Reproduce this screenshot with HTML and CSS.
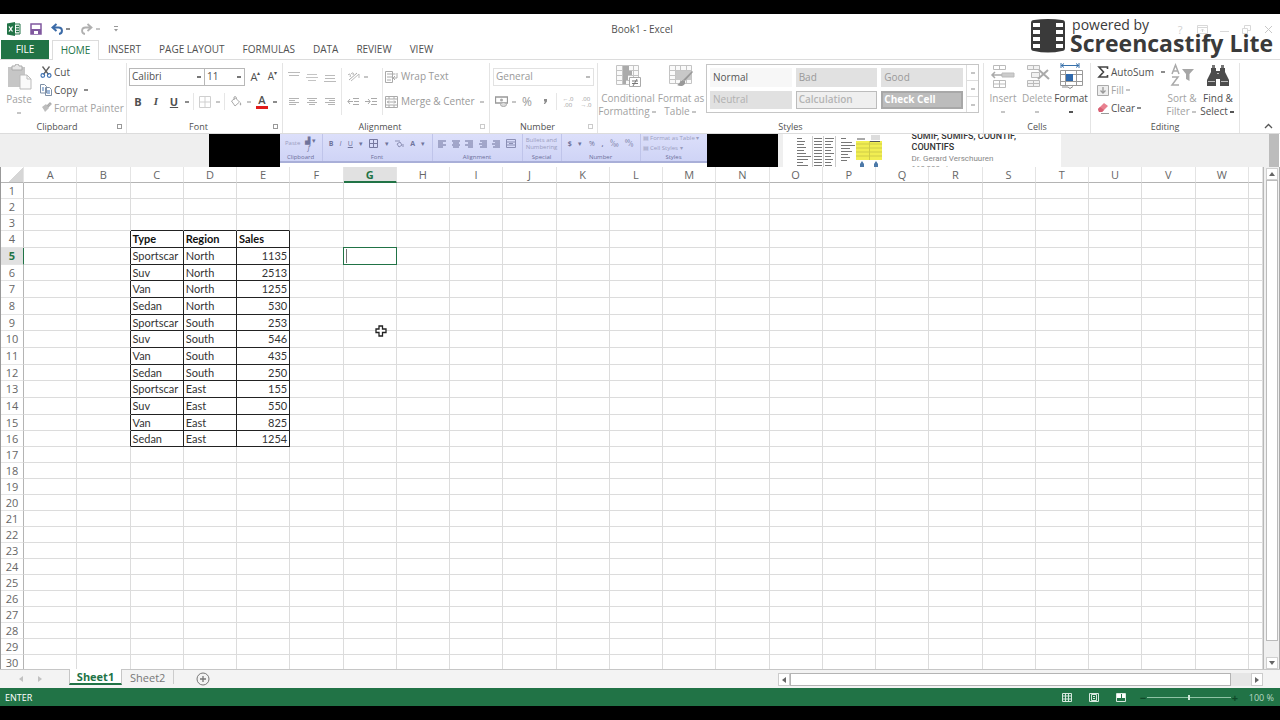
FILE: index.html
```html
<!DOCTYPE html>
<html lang="en">
<head>
<meta charset="utf-8">
<title>Book1 - Excel</title>
<link rel="stylesheet" href="styles.css">
</head>
<body>
<div class="app">
  <header class="titlebar">
    <div class="quick">
      <svg class="ico-xl" width="16" height="14" viewBox="0 0 16 14"><path d="M8 2h6v10H8z" fill="#fff" stroke="#217346"/><path d="M10 4.500h3M10 7h3M10 9.500h3" stroke="#217346" stroke-width="1.300"/><path d="M1 1.500 9 0v14l-8-1.500z" fill="#217346"/><path d="m3 4.500 3.500 5m0-5L3 9.500" stroke="#fff" stroke-width="1.300"/></svg>
      <button class="qbtn" aria-label="Save"><svg width="12" height="12" viewBox="0 0 12 12"><path d="M1 1h10v10H1z" fill="#fff" stroke="#80589f" stroke-width="1.500"/><path d="M1 6h10v5H1z" fill="#80589f"/><path d="M4 8h4v3H4z" fill="#fff"/></svg></button>
      <button class="qbtn undo" aria-label="Undo"><svg width="12" height="12" viewBox="0 0 12 12"><path d="M5.500 1 1.500 4.500l4 3.500M2 4.500h5.500c4.500 0 4.500 6 .5 6.500" fill="none" stroke="#3b6ba8" stroke-width="2"/></svg><i class="caret"></i></button>
      <button class="qbtn undo dim" aria-label="Redo"><svg width="12" height="12" viewBox="0 0 12 12"><path d="m6.500 1 4 3.500-4 3.500M10 4.500H4.500C0 4.500 0 10.500 4 11" fill="none" stroke="#b0b0b0" stroke-width="1.800"/></svg><i class="caret"></i></button>
      <button class="qbtn" aria-label="Customize toolbar"><svg width="6" height="6" viewBox="0 0 6 6"><path d="M1 .5h4" stroke="#999"/><path d="M1 3h4L3 5.500z" fill="#999"/></svg></button>
    </div>
    <h1 class="doc">Book1 - Excel</h1>
    <div class="winbtns">
      <button aria-label="Help">?</button>
      <button aria-label="Ribbon display"><svg width="11" height="9" viewBox="0 0 11 9"><path d="M.5.5h10v8H.5zM.5 2.500h10M5.500 7V4M4 5.500 5.500 4 7 5.500" fill="none" stroke="#d8d8d8"/></svg></button>
      <button aria-label="Minimize"><svg width="9" height="9" viewBox="0 0 9 9"><path d="M0 6.500h9" stroke="#d8d8d8"/></svg></button>
      <button aria-label="Restore"><svg width="9" height="9" viewBox="0 0 9 9"><path d="M.5 3.500h5v5h-5zM2.500 3V.5h6v5H6" fill="none" stroke="#d8d8d8"/></svg></button>
      <button aria-label="Close"><svg width="9" height="9" viewBox="0 0 9 9"><path d="m1 1 7 7m0-7L1 8" stroke="#c8c8c8"/></svg></button>
    </div>
  </header>
  <nav class="tabs">
    <button class="file">FILE</button>
    <button class="on">HOME</button>
    <button>INSERT</button>
    <button>PAGE LAYOUT</button>
    <button>FORMULAS</button>
    <button>DATA</button>
    <button>REVIEW</button>
    <button>VIEW</button>
  </nav>

  <div class="ribbon">
    <section class="group g-clip">
      <div class="body">
        <button class="big dim paste"><svg width="26" height="26" viewBox="0 0 26 26"><path d="M2 3h17v20H2z" fill="#c6c6c6"/><path d="M6 2h3a2 2 0 0 1 4 0h3v4H6z" fill="#e6e6e6" stroke="#aaa"/><path d="M14 11h7l4 4v10H14z" fill="#fafafa" stroke="#bbb"/><path d="M21 11v4h4" fill="none" stroke="#bbb"/></svg><span>Paste</span><i class="caret"></i></button>
        <div class="list">
          <button><svg width="12" height="12" viewBox="0 0 12 12"><path d="m2.500.5 6 8M9.500.5l-6 8" stroke="#606060" stroke-width="1.300"/><circle cx="2.800" cy="9.500" r="1.800" fill="none" stroke="#3f73b5" stroke-width="1.200"/><circle cx="9.200" cy="9.500" r="1.800" fill="none" stroke="#3f73b5" stroke-width="1.200"/></svg>Cut</button>
          <button><svg width="12" height="12" viewBox="0 0 12 12"><path d="M.5.5h4l2 2V9h-6zM5.500 3.500h4l2 2v6h-6z" fill="#fff" stroke="#7e8fa5"/><path d="M2 4h2M2 6h2M7 7h3M7 9h3" stroke="#3f73b5"/></svg>Copy<i class="caret far"></i></button>
          <button class="dim"><svg width="12" height="12" viewBox="0 0 12 12"><path d="m2 5 4-3 3 4-4 4-1-2z" fill="#bdbdbd"/><path d="m7 4 3-3 1 1-3 3" fill="none" stroke="#aaa" stroke-width="1.300"/></svg>Format Painter</button>
        </div>
      </div>
      <footer>Clipboard<i class="launch"></i></footer>
    </section>

    <section class="group g-font">
      <div class="body col">
        <div class="row">
          <label class="combo wide"><select aria-label="Font"><option>Calibri</option></select></label><label class="combo size"><select aria-label="Font size"><option>11</option></select></label>
          <button class="tool grow">A<sup>▴</sup></button><button class="tool grow small">A<sup>▾</sup></button>
        </div>
        <div class="row">
          <button class="tool"><b>B</b></button><button class="tool serif"><b>I</b></button><button class="tool"><b><u>U</u></b></button><i class="caret"></i><span class="sep"></span>
          <button class="tool dim" aria-label="Borders"><svg width="12" height="12" viewBox="0 0 12 12"><path d="M.5.5h11v11H.5zM6 0v12M0 6h12" fill="none" stroke="#cfcfcf"/></svg></button><i class="caret pale"></i><span class="sep"></span>
          <button class="tool dim" aria-label="Fill color"><svg width="12" height="12" viewBox="0 0 12 12"><path d="m1.500 5 4-3 4 4-4.500 4zM4 4V1c2-1 2.500 0 2.500 2" fill="none" stroke="#aaa"/><path d="M10.500 6q1.500 2.500 0 3.500-1.500-1 0-3.500" fill="#aaa"/></svg></button><i class="caret pale"></i>
          <button class="tool fcolor"><span>A</span></button><i class="caret"></i>
        </div>
      </div>
      <footer>Font<i class="launch"></i></footer>
    </section>

    <section class="group g-align">
      <div class="body">
        <div class="toolgrid three">
          <button class="tool" aria-label="Top align"><svg width="12" height="10" viewBox="0 0 12 10"><path d="M0 .5h12M1 3.500h10" stroke="#bbb"/></svg></button>
          <button class="tool" aria-label="Middle align"><svg width="12" height="10" viewBox="0 0 12 10"><path d="M1 2.500h10M0 5.500h12M2 8.500h8" stroke="#c4c4c4"/></svg></button>
          <button class="tool" aria-label="Bottom align"><svg width="12" height="10" viewBox="0 0 12 10"><path d="M1 3.500h10M1 6.500h10M0 9.500h12" stroke="#bbb"/></svg></button>
          <button class="tool" aria-label="Align left"><svg width="10" height="8" viewBox="0 0 10 8"><path d="M0 .5h10M0 2.500h6M0 4.500h10M0 6.500h7" stroke="#b4b4b4"/></svg></button>
          <button class="tool" aria-label="Center"><svg width="10" height="8" viewBox="0 0 10 8"><path d="M0 .5h10M2 2.500h6M0 4.500h10M2 6.500h6" stroke="#b4b4b4"/></svg></button>
          <button class="tool" aria-label="Align right"><svg width="10" height="8" viewBox="0 0 10 8"><path d="M0 .5h10M4 2.500h6M0 4.500h10M3 6.500h7" stroke="#b4b4b4"/></svg></button>
        </div>
        <span class="sep"></span>
        <div class="toolgrid two">
          <button class="tool" aria-label="Orientation"><svg width="13" height="11" viewBox="0 0 13 11"><path d="m2 9 8-7" stroke="#aaa"/><path d="M4 10 12 3v4" fill="none" stroke="#bbb"/><path d="M1 4c2-2 3 0 2 2m1-3c2-2 3-1 2 1" fill="none" stroke="#aaa"/></svg></button>
          <i class="caret pale"></i>
          <button class="tool" aria-label="Decrease indent"><svg width="12" height="8" viewBox="0 0 12 8"><path d="M6 .5h6M7 3.500h5M6 6.500h6M3 1 .8 3.500 3 6M1 3.500h5" fill="none" stroke="#aaa"/></svg></button>
          <button class="tool" aria-label="Increase indent"><svg width="12" height="8" viewBox="0 0 12 8"><path d="M6 .5h6M7 3.500h5M6 6.500h6M3 1l2.200 2.500L3 6M0 3.500h5" fill="none" stroke="#aaa"/></svg></button>
        </div>
        <span class="sep"></span>
        <div class="toolgrid one">
          <button class="line"><svg width="13" height="12" viewBox="0 0 13 12"><path d="M.5.5h7v11h-7zM2 3h8.500M2 6h6M2 9h4" fill="none" stroke="#aaa"/><path d="M12 2v5H8m2-2L8 7l2 2" fill="none" stroke="#aaa"/></svg>Wrap Text</button>
          <button class="line"><svg width="13" height="12" viewBox="0 0 13 12"><path d="M.5.5h12v11H.5zM.5 3h12M.5 9h12M4 .5V3m5-2.500V3M4 9v2.500M9 9v2.500M2 6h9M4 4.500 2.500 6 4 7.500m5-3L10.500 6 9 7.500" fill="none" stroke="#aaa"/></svg>Merge &amp; Center<i class="caret pale"></i></button>
        </div>
      </div>
      <footer>Alignment<i class="launch pale"></i></footer>
    </section>

    <section class="group g-num">
      <div class="body col">
        <div class="row"><label class="combo pale"><select aria-label="Number format"><option>General</option></select></label></div>
        <div class="row">
          <button class="tool" aria-label="Currency"><svg width="13" height="11" viewBox="0 0 13 11"><path d="M.5 1h12v6H.5z" fill="none" stroke="#999" stroke-width="1.300"/><circle cx="6.500" cy="4" r="1.500" fill="#aaa"/><ellipse cx="8.500" cy="8.500" rx="3" ry="2" fill="#ddd" stroke="#aaa"/></svg></button><i class="caret pale"></i>
          <button class="tool pct">%</button><button class="tool pct comma" aria-label="Comma style"><svg width="5" height="7" viewBox="0 0 5 7"><path d="M1 1h3v2.500L2 6H.8L2 3.500H1z" fill="#8c8c8c"/></svg></button><span class="sep"></span>
          <button class="tool dec">←.0<br>.00</button><button class="tool dec">.00<br>→.0</button>
        </div>
      </div>
      <footer>Number<i class="launch pale"></i></footer>
    </section>

    <section class="group g-style">
      <div class="body">
        <button class="big dim cond"><svg width="26" height="26" viewBox="0 0 26 26"><path d="M1.500 2.500h22v19h-22zM1.500 7.500h22M1.500 12.500h22M1.500 17.500h22M7.500 2.500v19M18.500 2.500v19" fill="#fafafa" stroke="#c4c4c4"/><path d="M8 3h6v5H8zM8 8h9v4H8zM8 12h5v5H8zM8 17h3v4H8z" fill="#aaa"/><path d="M14.500 14.500h11v9h-11z" fill="#fff" stroke="#aaa"/><path d="M17 18h6m-6 2.500h6M22 16l-4 7" stroke="#777"/></svg><span>Conditional</span><span>Formatting<i class="caret"></i></span></button>
        <button class="big dim astable"><svg width="26" height="26" viewBox="0 0 26 26"><path d="M1.500 2.500h22v18h-22zM1.500 7.500h22M1.500 12.500h22M1.500 16.500h22M7.500 2.500v18M12.500 2.500v18M18.500 2.500v18" fill="#fafafa" stroke="#c4c4c4"/><path d="M8 8h15v9H8z" fill="#c8c8c8"/><path d="m25 9-8 9-2-1 9-9z" fill="#999"/><path d="M15 17c-3 0-3 4-6 5 4 2 9 1 8-4z" fill="#999"/></svg><span>Format as</span><span>Table<i class="caret"></i></span></button>
        <div class="gallery">
          <div class="cells">
            <button class="st normal">Normal</button><button class="st">Bad</button><button class="st">Good</button>
            <button class="st pale">Neutral</button><button class="st calc">Calculation</button><button class="st check">Check Cell</button>
          </div>
          <div class="gscroll"><button aria-label="Up"><i class="caret pale"></i></button><button aria-label="Down"><i class="caret pale"></i></button><button aria-label="More"><i class="caret pale"></i></button></div>
        </div>
      </div>
      <footer>Styles</footer>
    </section>

    <section class="group g-cells">
      <div class="body">
        <button class="big dim"><svg width="26" height="26" viewBox="0 0 26 26"><path d="M3.500 2.500h12v4h-12zM9.500 2.500v4M3.500 17.500h12v7h-12zM9.500 17.500v7M3.500 21h12" fill="none" stroke="#bbb"/><path d="M12 10h12v4H12z" fill="#ccc" stroke="#bbb"/><path d="M12 12H2m3-3-3 3 3 3" fill="none" stroke="#aaa" stroke-width="1.500"/></svg><span>Insert</span><i class="caret"></i></button>
        <button class="big dim"><svg width="26" height="26" viewBox="0 0 26 26"><path d="M3.500 2.500h12v4h-12zM9.500 2.500v4M7.500 9.500h8v5h-8zM3.500 17.500h12v6h-12zM9.500 17.500v6M3.500 20.500h12" fill="#f2f2f2" stroke="#bbb"/><path d="m15 7 10 9m-1-9-10 9" stroke="#aaa" stroke-width="2"/></svg><span>Delete</span><i class="caret"></i></button>
        <button class="big"><svg width="26" height="26" viewBox="0 0 26 26"><path d="M3 2.500h18M3 0v5M21 0v5M6 .5 3.500 2.500 6 4.500M18 .5l2.500 2-2.500 2" fill="none" stroke="#3871ab"/><path d="M2.500 7.500h22v15h-22zM2.500 11.500h22M2.500 18.500h22M7.500 7.500v15M18.500 7.500v15" fill="#fff" stroke="#999"/><path d="M8 11h7v7H8z" fill="#2f69ad"/><path d="M4 24h6l2 1.500 3-2" fill="none" stroke="#888"/></svg><span>Format</span><i class="caret dark"></i></button>
      </div>
      <footer>Cells</footer>
    </section>

    <section class="group g-edit">
      <div class="body">
        <div class="list">
          <button><svg width="12" height="12" viewBox="0 0 12 12"><path d="M10.500 3V1H2l4.500 5L2 11h8.500V9" fill="none" stroke="#444" stroke-width="1.600"/></svg>AutoSum<i class="caret far"></i></button>
          <button class="dim"><svg width="12" height="12" viewBox="0 0 12 12"><path d="M.5 1.500h11v10H.5z" fill="#eee" stroke="#aaa"/><path d="M6 3v6M3.500 6.500 6 9l2.500-2.500" fill="none" stroke="#999" stroke-width="1.300"/></svg>Fill<i class="caret"></i></button>
          <button><svg width="12" height="12" viewBox="0 0 12 12"><path d="m1 7 6-6 4 3-6 6H2z" fill="#e8808f"/><path d="m1 7 2-2 4 3-2 2H2z" fill="#d85f73"/><path d="M4 11.500h8" stroke="#999"/></svg>Clear<i class="caret"></i></button>
        </div>
        <button class="big dim sort"><svg width="26" height="26" viewBox="0 0 26 26"><path d="m3 11 3.500-9L10 11M4 8h5M3 14h6l-6 8h7" fill="none" stroke="#aaa" stroke-width="1.500"/><path d="M13 6h12l-4.500 5v7L17 16v-5z" fill="#a6a6a6"/></svg><span>Sort &amp;</span><span>Filter<i class="caret"></i></span></button>
        <button class="big"><svg width="26" height="26" viewBox="0 0 26 26"><path d="M6 5h5v3h4V5h5v4l4 8v6h-9v-7h-4v7H2v-6l4-8z" fill="#4c4c4c"/><path d="M7 2h3v3H7zm9 0h3v3h-3z" fill="#777"/><path d="M3 18.500h7m6 0h7M12 10.500h2" stroke="#bbb"/></svg><span>Find &amp;</span><span>Select<i class="caret dark"></i></span></button>
      </div>
      <footer>Editing</footer>
    </section>
    <button class="collapse" aria-label="Collapse ribbon"><svg width="9" height="6" viewBox="0 0 9 6"><path d="m1 5 3.500-3.500L8 5" fill="none" stroke="#555" stroke-width="1.300"/></svg></button>
  </div>

  <div class="strip">
    <div class="gap"></div>
    <div class="black"></div>
    <div class="mini">
      <div class="mg m1"><div class="mb"><span>Paste</span><span class="ink">▟ ▾<br>&nbsp;<em>ƒ</em></span></div><small>Clipboard</small></div>
      <div class="mg m2"><div class="mb ink"><b>B</b><em>I</em><u>U</u><span>▾</span><svg width="9" height="9" viewBox="0 0 9 9"><path d="M.5.5h8v8h-8zM4.500 0v9M0 4.500h9" fill="none" stroke="#7679a0"/></svg><span>▾</span><svg width="9" height="9" viewBox="0 0 9 9"><path d="M0 2h5M2 5l3-2 2 3-3 2zM8 5v3" fill="none" stroke="#8b8fb4"/></svg><b>A</b><span>▾</span></div><small>Font</small></div>
      <div class="mg m3"><div class="mb ink"><svg width="8" height="8" viewBox="0 0 8 8"><path d="M0 1h8M0 3h5M0 5h8M0 7h5" stroke="#6c709a"/></svg><svg width="8" height="8" viewBox="0 0 8 8"><path d="M0 1h8M1 3h6M0 5h8M1 7h6" stroke="#6c709a"/></svg><svg width="8" height="8" viewBox="0 0 8 8"><path d="M0 1h8M3 3h5M0 5h8M3 7h5" stroke="#6c709a"/></svg><svg width="8" height="8" viewBox="0 0 8 8"><path d="M1 1h7M3 3h5M3 5h5M1 7h7M0 4h3" stroke="#6c709a"/></svg><svg width="8" height="8" viewBox="0 0 8 8"><path d="M1 1h7M3 3h5M3 5h5M1 7h7M0 4h3" stroke="#6c709a"/></svg><svg width="10" height="9" viewBox="0 0 10 9"><path d="M.5.5h9v8h-9zM.5 3h9M.5 6h9M3 4.500h4" fill="none" stroke="#8b8fb4"/></svg></div><small>Alignment</small></div>
      <div class="mg m4"><div class="mb"><span>Bullets and<br>Numbering</span></div><small>Special</small></div>
      <div class="mg m5"><div class="mb ink"><b>$</b><span>▾</span><span>%</span><b>,</b><span>⁰⁄₀₀</span><span>⁰⁰⁄₀</span></div><small>Number</small></div>
      <div class="mg m6"><div class="mb lines"><span>▤ Format as Table ▾</span><span>▤ Cell Styles ▾</span></div><small>Styles</small></div>
    </div>
    <div class="black"></div>
    <div class="video">
      <svg width="88" height="33" viewBox="0 0 88 33"><path d="M61 7h26v19H61z" fill="#f1ee52"/><path d="M74.500 7v19M61 10h26M61 14h26M61 18h26M61 22h26" stroke="#cfcc48"/><path d="M76 1h9v5h-9z" fill="#ddd"/><path d="M62 5h8M75 7.500h10" stroke="#555"/><path d="M17.500 2v31M28.500 2v31M40.500 2v31" stroke="#ccc"/><path d="M2 4.500h5M2 7.500h8M2 10.500h7M2 13.500h9M2 16.500h7M2 19.500h9M2 22.500h14M2 25.500h11M2 28.500h6M2 31.500h11M19 4.500h8M19 7.500h8M19 10.500h8M19 13.500h8M19 16.500h8M19 19.500h8M19 22.500h8M19 25.500h8M19 28.500h8M19 31.500h8M30 4.500h9M30 7.500h8M30 10.500h6M30 13.500h8M30 16.500h6M30 19.500h9M30 22.500h6M30 25.500h8M30 28.500h6M30 31.500h7M46 4.500h5M46 8.500h11M46 11.500h14M46 14.500h9M46 17.500h11M46 20.500h7M46 23.500h9M46 26.500h6" stroke="#777"/><path d="M67 27l2 3v3h-4v-3zM81 27l2 3v3h-4v-3z" fill="#4c79a8"/></svg>
      <div class="vtext"><strong>SUMIF, SUMIFS, COUNTIF,<br>COUNTIFS</strong><span>Dr. Gerard Verschuuren<br>168,388 views</span></div>
    </div>
    <div class="gap right"></div>
    <div class="thumbbar"></div>
  </div>

  <main class="sheet">
    <div class="grid">
      <table id="cells"></table>
      <svg class="cursor" width="12" height="12" viewBox="0 0 12 12"><path d="M4 1h3.500v3H11v3.500H7.500V11H4V7.500H1V4h3z" fill="#fff" stroke="#222" stroke-width="1.300"/></svg>
    </div>
    <div class="vbar">
      <button aria-label="Scroll up"><i class="tri up"></i></button>
      <div class="vthumb"></div>
      <button aria-label="Scroll down"><i class="tri down"></i></button>
    </div>
  </main>

  <div class="sheettabs">
    <div class="nav"><button aria-label="Previous sheet"><i class="tri left"></i></button><button aria-label="Next sheet"><i class="tri right"></i></button></div>
    <button class="stab on">Sheet1</button>
    <button class="stab">Sheet2</button>
    <button class="add" aria-label="New sheet"><svg width="14" height="14" viewBox="0 0 14 14"><circle cx="7" cy="7" r="6" fill="none" stroke="#777"/><path d="M7 4v6M4 7h6" stroke="#777" stroke-width="1.300"/></svg></button>
    <div class="hbar">
      <button aria-label="Scroll left"><i class="tri left"></i></button>
      <div class="hthumb"></div><div class="htrack"></div>
      <button aria-label="Scroll right"><i class="tri right"></i></button>
    </div>
  </div>

  <footer class="status">
    <span class="mode">ENTER</span>
    <button aria-label="Normal view"><svg width="10" height="9" viewBox="0 0 10 9"><path d="M.5.5h9v8h-9zM3.500 0v9M6.500 0v9M0 3h10M0 6h10" fill="none" stroke="#d7e8de"/></svg></button>
    <button aria-label="Page layout view"><svg width="10" height="9" viewBox="0 0 10 9"><path d="M.5.5h9v8h-9zM2.500 1.500h5v6h-5zM4 3.500h2M4 5.500h2" fill="none" stroke="#d7e8de"/></svg></button>
    <button aria-label="Page break view"><svg width="10" height="9" viewBox="0 0 10 9"><path d="M.5.500h9v8h-9z" fill="none" stroke="#d7e8de"/><path d="M1 1h4v4H1zM6 1h3v4H6z" fill="#fff"/></svg></button>
    <div class="zoom"><button aria-label="Zoom out">−</button><input type="range" aria-label="Zoom" min="0" max="200" value="100"><button aria-label="Zoom in">+</button></div>
    <span class="pct">100 %</span>
  </footer>

  <div class="brand">
    <svg width="34" height="35" viewBox="0 0 34 35"><path d="M3 2q14-2 28 0 3 0 3 3v25q0 3-3 3-14 3-28 0-3 0-3-3V5q0-3 3-3z" fill="#3a3a3a"/><path d="M2 5h7v4H2zM2 12h7v4H2zM2 19h7v4H2zM2 26h7v4H2zM25 5h7v4h-7zM25 12h7v4h-7zM25 19h7v4h-7zM25 26h7v4h-7z" fill="#fff"/></svg>
    <div><span>powered by</span><strong>Screencastify Lite</strong></div>
  </div>
</div>
<script src="sheet.js"></script>
</body>
</html>
```
FILE: styles.css
```css
* { box-sizing: border-box; }
body { margin: 0; background: #000; font: 10px/13px "Open Sans", "Noto Sans", sans-serif; color: #505050; }
button, select { font: inherit; color: inherit; background: none; border: 0; padding: 0; margin: 0; }
button { display: inline-flex; align-items: center; justify-content: center; white-space: nowrap; }
svg { display: block; flex: none; }
.app { position: relative; display: flex; flex-direction: column; height: 100vh; background: #fff; border: solid #000; border-width: 14px 0; }
.dim { color: #a2a2a2; }

.caret { flex: none; display: inline-block; width: 8px; height: 3px; background: linear-gradient(#8c8c8c, #8c8c8c) center / 4px 2px no-repeat; vertical-align: middle; }
.dim .caret, .caret.pale { opacity: .5; }
.caret.dark { background-image: linear-gradient(#555, #555); }
.list .caret.far { margin-left: 3px; }
.list .caret { margin-left: -2px; }
.sep { width: 1px; align-self: stretch; margin: 0 2px; background: #e6e6e6; }

.titlebar { display: grid; grid-template-columns: 1fr auto 1fr; align-items: center; height: 26px; padding: 4px 2px 0 6px; }
.quick { display: flex; align-items: center; gap: 8px; }
.qbtn { height: 14px; min-width: 12px; gap: 1px; }
.undo { width: 22px; }
.doc { margin: 0; font-size: 10px; font-weight: 400; }
.winbtns { display: flex; justify-content: flex-end; gap: 2px; color: #d0d0d0; }
.winbtns button { width: 20px; height: 14px; font-size: 11px; }

.tabs { display: flex; height: 20px; padding-left: 1px; border-bottom: 1px solid #dcdcdc; }
.tabs button { padding: 0 8px; margin-right: 2px; }
.tabs .file { width: 48px; margin-right: 3px; background: #217346; color: #fff; }
.tabs .on { width: 47px; margin-right: 1px; color: #217346; border: 1px solid #dcdcdc; border-bottom: 0; background: #fff; margin-bottom: -1px; }

.ribbon { display: flex; height: 74px; flex: none; border-bottom: 1px solid #dcdcdc; padding-top: 3px; }
.group { display: flex; flex-direction: column; flex: none; border-right: 1px solid #e4e4e4; }
.group .body { display: flex; height: 56px; }
.group .col { flex-direction: column; padding-top: 1px; }
.group footer { display: flex; justify-content: center; position: relative; height: 14px; line-height: 15px; font-size: 9px; }
.g-clip footer, .g-font footer, .g-align footer, .g-num footer { padding-right: 12px; }
.launch { position: absolute; right: 4px; top: 5px; width: 5px; height: 5px; border: solid #999; border-width: 1px 0 0 1px; }
.launch::after { content: ""; position: absolute; right: 0; bottom: 0; width: 3px; height: 3px; border: solid #999; border-width: 0 1px 1px 0; }
.launch.pale { opacity: .5; }
.g-clip { width: 127px; }
.g-font { width: 156px; }
.g-align { width: 207px; }
.g-num { width: 108px; }
.g-style { flex: 1; min-width: 300px; }
.g-cells { width: 107px; }
.g-edit { width: 149px; }

.big { flex-direction: column; justify-content: flex-start; width: 34px; }
.big svg { margin-bottom: 3px; }
.big > span { height: 13px; line-height: 13px; }
.big > .caret { margin-top: 5px; }
.paste { width: 38px; padding-top: 1px; }
.cond { width: 60px; }
.astable { width: 46px; }
.g-cells .body { padding-left: 2px; }
.sort { width: 38px; }
.list { display: flex; flex-direction: column; }
.list button { height: 18px; gap: 2px; justify-content: flex-start; }
.g-clip .list { padding-left: 2px; }
.g-edit .list { padding-left: 6px; width: 72px; }

.row { display: flex; align-items: center; padding-left: 2px; height: 25px; }
.row + .row .tool { height: 18px; }
.row .sep { margin-top: 4px; margin-bottom: 4px; }
.tool { width: 18px; font-size: 11px; flex: none; }
.serif { font-family: "Liberation Serif", serif; font-style: italic; }
.grow { width: 17px; font-size: 11px; padding-left: 4px; }
.grow.small { font-size: 10px; }
.grow sup { font-size: 6px; line-height: 6px; align-self: flex-start; }
.fcolor span { width: 12px; line-height: 12px; border-bottom: 3px solid #e21b1b; font-weight: 600; }
.combo { position: relative; display: flex; height: 18px; border: 1px solid #b8b8b8; }
.combo::after { content: ""; position: absolute; right: 3px; top: 7px; width: 4px; height: 2px; background: #777; pointer-events: none; }
.combo select { appearance: none; width: 100%; padding-left: 2px; outline: 0; }
.combo.wide { width: 76px; }
.combo.size { width: 40px; border-left: 0; }
.combo.pale { width: 101px; margin-left: 1px; border-color: #e2e2e2; color: #999; }
.combo.pale::after { opacity: .5; }
.pct { color: #999; font-size: 12px; }
.dec { color: #999; font-size: 6px; line-height: 6px; }

.g-align .body { color: #999; padding: 1px 0 0 2px; }
.g-align .sep { margin-top: 4px; margin-bottom: 4px; }
.toolgrid { display: grid; grid-template-rows: 25px 25px; align-items: center; }
.three { grid-template-columns: repeat(3, 18px); }
.two { grid-template-columns: repeat(2, 18px); }
.one { flex: 1; }
.line { justify-content: flex-start; gap: 3px; }

.gallery { flex: 1; display: flex; margin: 1px 4px 6px 2px; border: 1px solid #c6c6c6; }
.cells { flex: 1; display: grid; grid-template-columns: repeat(3, 1fr); grid-template-rows: 1fr 1fr; gap: 4px; padding: 3px; }
.st { justify-content: flex-start; padding-left: 3px; background: #e1e1e1; color: #999; }
.st.normal { background: #f7f7f7; color: #555; }
.st.pale { color: #b0b0b0; }
.st.calc { border: 1px solid #bcbcbc; background: #efefef; color: #b4b4b4; font-weight: 600; padding-left: 2px; }
.st.check { border: 2px solid #a8a8a8; background: #bcbcbc; color: #fff; font-weight: 700; padding-left: 1px; }
.gscroll { display: grid; width: 12px; border-left: 1px solid #ddd; }
.gscroll button + button { border-top: 1px solid #ddd; }
.collapse { align-self: flex-end; width: 40px; padding-left: 16px; height: 14px; }

.strip { display: flex; height: 33px; flex: none; overflow: hidden; }
.gap { background: #efefef; flex: 208; }
.black { background: #000; flex: 0 0 71px; }
.mini { display: flex; flex: 0 0 427px; height: 29px; background: linear-gradient(#dcdffa, #cfd4f6); border-bottom: 2px solid #a9afd8; font-size: 6px; line-height: 7px; color: #9a9dbf; }
.mg { display: flex; flex-direction: column; justify-content: space-between; border-right: 1px solid #bfc4ea; overflow: hidden; }
.mg small { text-align: center; font-size: 6px; color: #6b6f9a; line-height: 8px; }
.mb { display: flex; align-items: center; justify-content: space-around; height: 19px; padding: 0 3px; white-space: nowrap; }
.ink { color: #70749c; font-size: 7px; }
.m1 { width: 43px; }
.m2 { width: 110px; }
.m3 { width: 90px; }
.m4 { width: 39px; }
.m5 { width: 79px; }
.m6 { flex: 1; border: 0; }
.lines { flex-direction: column; align-items: flex-start; justify-content: flex-end; line-height: 10px; padding: 0 2px; }
.video { flex: 0 0 283px; display: flex; gap: 29px; padding-left: 12px; border-left: 5px solid #efefef; overflow: hidden; }
.vtext strong { display: block; margin-top: -3px; font: 500 9px/11px Roboto, sans-serif; color: #333; }
.vtext span { display: block; margin-top: 1px; font: 8px/10px Roboto, sans-serif; color: #888; white-space: nowrap; }
.thumbbar { flex: 0 0 10px; background: #bcbcbc; margin-right: 1px; }

.sheet { flex: 1; display: flex; min-height: 0; border-left: 1px solid #999; }
.grid { position: relative; flex: 1; overflow: hidden; border-right: 1px solid #b8b8b8; }
table { width: 100%; table-layout: fixed; border-collapse: separate; border-spacing: 0; }
col.rowhead { width: 23px; }
col.rest { width: 14px; }
th, td { height: 16px; padding: 0; line-height: 14px; border: solid #dcdcdc; border-width: 0 1px 1px 0; white-space: nowrap; overflow: hidden; }
th { font-size: 11px; font-weight: 400; color: #666; }
tbody th { border-right-color: #b4b4b4; border-bottom-color: #e4e4e4; }
thead th { border-bottom-color: #b4b4b4; border-right-color: #e4e4e4; }
.corner { background: linear-gradient(135deg, transparent 62%, #d6d6d6 62%); }
.picked { background: #e1e1e1; color: #217346; font-weight: 700; }
thead .picked { border-bottom: 2px solid #217346; line-height: 13px; }
tbody .picked { border-right-color: #217346; }
.filled > * { height: 17px; }
.filled:nth-child(3n) > *, .filled:nth-child(16) > * { height: 16px; }
td { font: 11px/14px Lato, sans-serif; color: #333; padding: 0 2px; }
.value { border-color: #222; }
.edge-right { border-right-color: #222; }
.edge-bottom { border-bottom-color: #222; }
.num { text-align: right; padding-right: 2px; }
.head { font-weight: 700; color: #111; }
td.active { position: relative; overflow: visible; }
.active::before { content: ""; position: absolute; inset: -1px; border: 1px solid #217346; }
.active::after { content: ""; position: absolute; left: 2px; top: 1px; bottom: 1px; width: 1px; background: #777; }
.cursor { position: absolute; left: 374px; top: 158px; }

.tri { width: 0; height: 0; border: 3px solid transparent; }
.tri.up { border-bottom: 4px solid #666; border-top: 0; }
.tri.down { border-top: 4px solid #666; border-bottom: 0; }
.tri.left { border-right: 4px solid #666; border-left: 0; }
.tri.right { border-left: 4px solid #666; border-right: 0; }
.vbar { display: flex; flex-direction: column; width: 16px; padding: 1px 1px 0 2px; background: #f0f0f0; border-right: 1px solid #aaa; }
.vbar button { height: 12px; background: #fff; border: 1px solid #d0d0d0; }
.vthumb { flex: 1; margin-bottom: 16px; background: #fff; border: 1px solid #bbb; }

.sheettabs { display: flex; flex: none; height: 19px; background: #f3f3f3; border-top: 1px solid #c6c6c6; padding-left: 1px; }
.nav { display: flex; width: 68px; justify-content: center; gap: 15px; padding-right: 10px; opacity: .35; }
.stab { height: 14px; padding: 0 8px; font-size: 11px; color: #777; border-right: 1px solid #ccc; }
.stab.on { width: 53px; height: 16px; margin-top: -1px; background: #fff; color: #217346; font-weight: 700; border: solid #c6c6c6; border-width: 0 1px 2px; border-bottom-color: #217346; }
.add { margin-left: 22px; }
.hbar { display: flex; flex: 0 1 485px; margin: 3px 17px 2px auto; background: #e6e6e6; }
.hbar button { width: 12px; background: #fff; border: 1px solid #ccc; }
.hthumb { flex: 1; background: #fff; border: 1px solid #b4b4b4; }
.htrack { width: 20px; }

.status { display: flex; align-items: center; flex: none; height: 18px; padding: 0 6px 0 5px; background: #217346; color: #fff; font-size: 9px; }
.mode { margin-right: auto; }
.status > button { margin-right: 17px; }
.zoom { display: flex; align-items: center; margin-right: 10px; margin-left: -4px; }
.zoom button { width: 8px; color: #0f4a29; font-weight: 700; font-size: 11px; }
.zoom input { appearance: none; width: 84px; height: 9px; margin: 0; background: linear-gradient(#8fc3a5, #8fc3a5) center / 100% 1px no-repeat; }
.zoom input::-webkit-slider-thumb { appearance: none; width: 2px; height: 5px; background: #cfe6d8; }
.status .pct { color: #b9d8c5; font-size: 9px; }

.brand { position: absolute; right: 7px; top: 4px; display: flex; gap: 5px; color: #3a3a3a; }
.brand div { display: flex; flex-direction: column; }
.brand span { font-size: 14px; line-height: 14px; padding-left: 2px; }
.brand strong { font-size: 23px; line-height: 22px; white-space: nowrap; }
```
FILE: sheet.js
```js
const letters = "ABCDEFGHIJKLMNOPQRSTUVW".split("");
const data = {
  4: ["Type", "Region", "Sales"],
  5: ["Sportscar", "North", 1135],
  6: ["Suv", "North", 2513],
  7: ["Van", "North", 1255],
  8: ["Sedan", "North", 530],
  9: ["Sportscar", "South", 253],
  10: ["Suv", "South", 546],
  11: ["Van", "South", 435],
  12: ["Sedan", "South", 250],
  13: ["Sportscar", "East", 155],
  14: ["Suv", "East", 550],
  15: ["Van", "East", 825],
  16: ["Sedan", "East", 1254]
};

let html = '<colgroup><col class="rowhead">' + "<col>".repeat(letters.length) + '<col class="rest"></colgroup>';
html += '<thead><tr><th class="corner"></th>';
letters.forEach(l => { html += `<th scope="col"${l === "G" ? ' class="picked"' : ""}>${l}</th>`; });
html += "<th></th></tr></thead><tbody>";

for (let r = 1; r <= 30; r++) {
  html += `<tr${data[r] ? ' class="filled"' : ""}><th scope="row"${r === 5 ? ' class="picked"' : ""}>${r}</th>`;
  letters.forEach((l, i) => {
    const cls = [];
    let text = "";
    if (data[r] && i >= 2 && i <= 4) {
      text = data[r][i - 2];
      cls.push("value");
      if (r === 4) cls.push("head");
      if (typeof text === "number") cls.push("num");
    }
    if (data[r] && l === "B") cls.push("edge-right");
    if (r === 3 && i >= 2 && i <= 4) cls.push("edge-bottom");
    if (r === 5 && l === "G") cls.push("active");
    html += `<td${cls.length ? ` class="${cls.join(" ")}"` : ""}>${text}</td>`;
  });
  html += "<td></td></tr>";
}
document.getElementById("cells").innerHTML = html + "</tbody>";
```
